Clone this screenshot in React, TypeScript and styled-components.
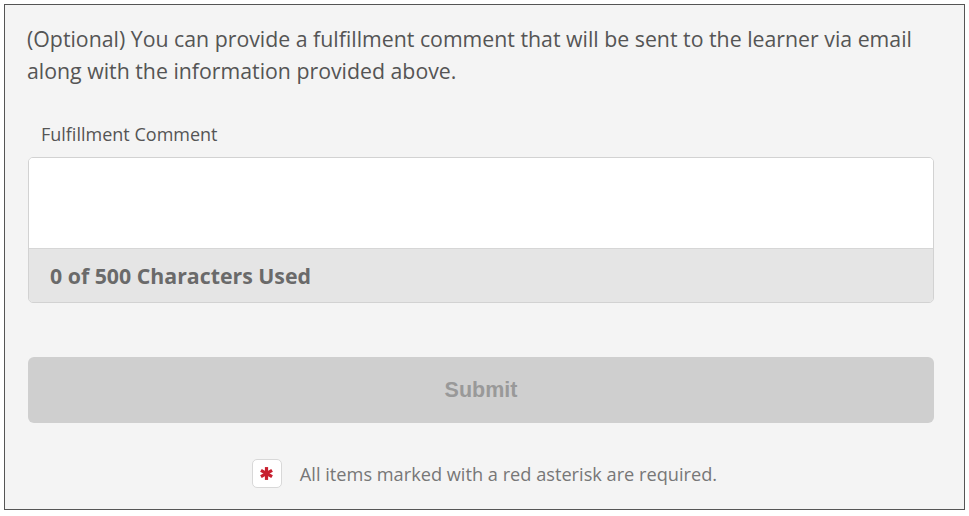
import React from "react";
import styled, { createGlobalStyle } from "styled-components";

const Global = createGlobalStyle`
  html, body { margin: 0; padding: 0; background: #ffffff; }
  * { box-sizing: border-box; }
`;

const Frame = styled.div`
  margin: 4px 0 0 4px;
  width: 961px;
  height: 506px;
  border: 1px solid #555555;
  background: #f4f4f4;
  padding: 18px 30px 0 23px;
  font-family: "Open Sans", "Liberation Sans", sans-serif;
  display: flex;
  flex-direction: column;
`;

const Intro = styled.p`
  margin: 0 0 0 -1px;
  font-size: 21.3px;
  line-height: 32px;
  color: #555555;
`;

const Label = styled.div`
  margin-top: 36px;
  padding-left: 13px;
  font-size: 18px;
  line-height: 22px;
  color: #555555;
`;

const Field = styled.div`
  margin-top: 12px;
  width: 906px;
  border: 1px solid #d2d2d2;
  border-radius: 5px;
  overflow: hidden;
  display: flex;
  flex-direction: column;
`;

const Area = styled.textarea`
  display: block;
  height: 91px;
  border: none;
  border-bottom: 1px solid #d6d6d6;
  background: #ffffff;
  resize: none;
  outline: none;
  padding: 10px 14px;
  font-family: inherit;
  font-size: 18px;
`;

const Counter = styled.div`
  height: 53px;
  background: #e5e5e5;
  display: flex;
  align-items: center;
  padding-left: 21px;
  font-size: 21.3px;
  font-weight: 700;
  color: #6a6a6a;
`;

const SubmitButton = styled.button`
  margin-top: 54px;
  width: 906px;
  height: 66px;
  border: none;
  border-radius: 6px;
  background: #cfcfcf;
  color: #999999;
  font-family: "Liberation Sans", Arial, sans-serif;
  font-weight: 700;
  font-size: 21.5px;
  cursor: default;
`;

const RequiredRow = styled.div`
  margin-top: 36px;
  width: 906px;
  display: flex;
  align-items: center;
  justify-content: center;
  gap: 18px;
  padding-left: 7px;
`;

const StarBox = styled.span`
  width: 30px;
  height: 29px;
  border: 1px solid #d8d8d8;
  border-radius: 5px;
  background: #ffffff;
  display: flex;
  align-items: center;
  justify-content: center;
`;

const RequiredText = styled.span`
  font-size: 18.2px;
  line-height: 24px;
  color: #777777;
`;

export default function App() {
  return (
    <>
      <Global />
      <Frame>
        <Intro>
          (Optional) You can provide a fulfillment comment that will be sent to the learner via email along with the
          information provided above.
        </Intro>
        <Label>Fulfillment Comment</Label>
        <Field>
          <Area aria-label="Fulfillment Comment" />
          <Counter>0 of 500 Characters Used</Counter>
        </Field>
        <SubmitButton disabled>Submit</SubmitButton>
        <RequiredRow>
          <StarBox>
            <svg width="15" height="15" viewBox="0 0 14 14" aria-hidden="true">
              <g stroke="#c8202f" strokeWidth="3" strokeLinecap="butt">
                <line x1="7" y1="1" x2="7" y2="13" />
                <line x1="1.8" y1="4" x2="12.2" y2="10" />
                <line x1="1.8" y1="10" x2="12.2" y2="4" />
              </g>
            </svg>
          </StarBox>
          <RequiredText>All items marked with a red asterisk are required.</RequiredText>
        </RequiredRow>
      </Frame>
    </>
  );
}
